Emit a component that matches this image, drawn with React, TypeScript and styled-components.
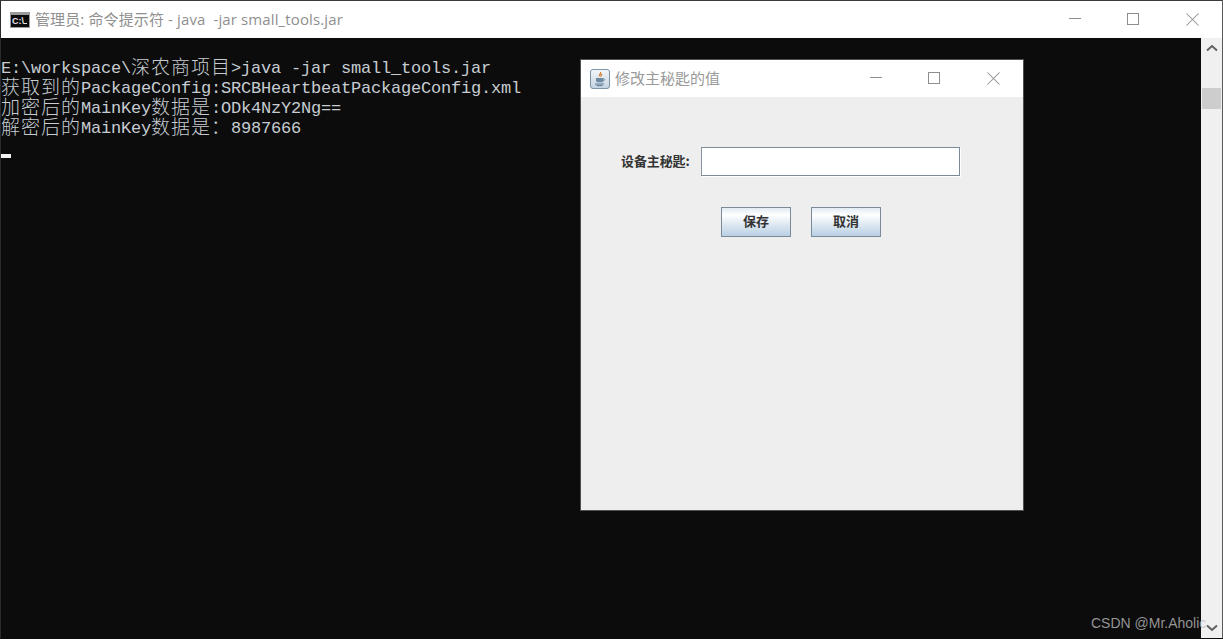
import styled, { createGlobalStyle } from 'styled-components';

const GlobalStyle = createGlobalStyle`
  html, body {
    margin: 0;
    padding: 0;
    background: #0c0c0c;
  }
`;

const CJK = '"Noto Sans CJK SC"';

function CmdIcon() {
  return (
    <svg width="20" height="16" viewBox="0 0 20 16">
      <rect x="0" y="0" width="20" height="16" fill="#9a9a9a" />
      <rect x="1" y="3" width="18" height="12" fill="#0c0c0c" />
      <text x="2" y="12" fontFamily="Liberation Sans, sans-serif" fontWeight="700" fontSize="9" fill="#e8e8e8">
        C:\
      </text>
      <rect x="14" y="11" width="3" height="1" fill="#e8e8e8" />
    </svg>
  );
}

function JavaIcon() {
  return (
    <svg width="20" height="20" viewBox="0 0 20 20">
      <defs>
        <linearGradient id="javaBg" x1="0" y1="0" x2="0" y2="1">
          <stop offset="0" stopColor="#f4f7fa" />
          <stop offset="1" stopColor="#c3d2e0" />
        </linearGradient>
      </defs>
      <rect x="0.5" y="0.5" width="19" height="19" rx="2.5" fill="url(#javaBg)" stroke="#7f93a6" />
      <path d="M10.5 3c1 1.5-1.8 2.5-1 4.2M12 5c-.5 1-1.6 1.4-1.2 2.6" fill="none" stroke="#d9782a" strokeWidth="1.2" />
      <path d="M6 9h7.5v2.5c0 1.2-1 1.8-2 1.8H8c-1 0-2-.6-2-1.8z" fill="#6f8aa3" />
      <path d="M13.5 9.8c1.4-.2 1.6 1.6-.3 2" fill="none" stroke="#6f8aa3" />
      <path d="M5 15h9M6.5 16.6h6" stroke="#5a7894" strokeWidth="1" />
    </svg>
  );
}

export default function App() {
  return (
    <Desktop>
      <GlobalStyle />
      <ConsoleWindow>
        <TitleBar>
          <TitleIcon>
            <CmdIcon />
          </TitleIcon>
          <ConsoleTitle>管理员: 命令提示符 - java&nbsp;&nbsp;-jar small_tools.jar</ConsoleTitle>
          <Controls>
            <MinButton />
            <MaxButton />
            <CloseButton />
          </Controls>
        </TitleBar>
        <ConsoleArea>
          <Terminal>
            <Row />
            <Row>
              E:\workspace\<Han>深农商项目</Han>&gt;java -jar small_tools.jar
            </Row>
            <Row>
              <Han>获取到的</Han>PackageConfig:SRCBHeartbeatPackageConfig.xml
            </Row>
            <Row>
              <Han>加密后的</Han>MainKey<Han>数据是</Han>:ODk4NzY2Ng==
            </Row>
            <Row>
              <Han>解密后的</Han>MainKey<Han>数据是：</Han>8987666
            </Row>
            <Row>
              <Cursor />
            </Row>
          </Terminal>
          <Scrollbar>
            <Arrow viewBox="0 0 12 8">
              <path d="M1 6.5 6 2l5 4.5" />
            </Arrow>
            <Thumb />
            <Spacer />
            <Arrow viewBox="0 0 12 8">
              <path d="M1 1.5 6 6l5-4.5" />
            </Arrow>
          </Scrollbar>
        </ConsoleArea>
      </ConsoleWindow>

      <Dialog>
        <DialogTitleBar>
          <JavaIcon />
          <DialogTitle>修改主秘匙的值</DialogTitle>
          <DialogControls>
            <MinButton />
            <MaxButton />
            <CloseButton />
          </DialogControls>
        </DialogTitleBar>
        <DialogBody>
          <FieldRow>
            <FieldLabel>设备主秘匙:</FieldLabel>
            <FieldInput />
          </FieldRow>
          <ButtonRow>
            <SwingButton>保存</SwingButton>
            <SwingButton>取消</SwingButton>
          </ButtonRow>
        </DialogBody>
      </Dialog>

      <Watermark>CSDN @Mr.Aholic</Watermark>
    </Desktop>
  );
}

const Desktop = styled.div`
  position: relative;
  width: 1223px;
  height: 639px;
  overflow: hidden;
  background: #0c0c0c;
`;

const ConsoleWindow = styled.div`
  display: flex;
  flex-direction: column;
  height: 637px;
  border-top: 1px solid #3a3d36;
  border-left: 1px solid #2c2c2c;
  border-right: 1px solid #5a5a5a;
`;

const TitleBar = styled.div`
  display: flex;
  align-items: center;
  height: 37px;
  flex: none;
  background: #ffffff;
  padding-left: 9px;
`;

const TitleIcon = styled.div`
  display: flex;
  margin-right: 5px;
`;

const ConsoleTitle = styled.div`
  margin-bottom: 1px;
  font: 15px/20px "Open Sans", ${CJK}, sans-serif;
  color: #8f8f8f;
  white-space: nowrap;
  letter-spacing: 0.12px;
`;

const Controls = styled.div`
  display: flex;
  margin-left: auto;
  margin-right: 1px;
`;

const ControlBase = styled.div`
  position: relative;
  width: 59px;
  height: 37px;
`;

const MinButton = styled(ControlBase)`
  &::before {
    content: '';
    position: absolute;
    left: 25px;
    top: 17px;
    width: 12px;
    height: 1px;
    background: #8e8e8e;
  }
`;

const MaxButton = styled(ControlBase)`
  &::before {
    content: '';
    position: absolute;
    left: 24px;
    top: 12px;
    width: 10px;
    height: 10px;
    border: 1px solid #8e8e8e;
  }
`;

const CloseButton = styled(ControlBase)`
  &::before,
  &::after {
    content: '';
    position: absolute;
    left: 22px;
    top: 18px;
    width: 17px;
    height: 1px;
    background: #8e8e8e;
    transform: rotate(45deg);
  }
  &::after {
    transform: rotate(-45deg);
  }
`;

const ConsoleArea = styled.div`
  display: flex;
  flex: 1;
  min-height: 0;
  background: #0c0c0c;
`;

const Terminal = styled.div`
  flex: 1;
  color: #c6ccd2;
  font-family: "Liberation Mono", monospace;
  font-size: 17px;
  letter-spacing: -0.2px;
`;

const Row = styled.div`
  position: relative;
  height: 20px;
  line-height: 16px;
  white-space: pre;
`;

const Han = styled.span`
  font-family: ${CJK}, sans-serif;
  font-size: 19px;
  font-weight: 300;
  line-height: 16px;
  letter-spacing: 1px;
  vertical-align: -1px;
`;

const Cursor = styled.div`
  position: absolute;
  left: 0;
  bottom: 0;
  width: 10px;
  height: 4px;
  background: #f2f2f2;
`;

const Scrollbar = styled.div`
  display: flex;
  flex-direction: column;
  align-items: center;
  width: 21px;
  flex: none;
  background: #f0f0f0;
  padding: 6px 0;
  box-sizing: border-box;
`;

const Arrow = styled.svg`
  width: 12px;
  height: 8px;
  flex: none;

  path {
    fill: none;
    stroke: #606060;
    stroke-width: 2;
  }
`;

const Thumb = styled.div`
  width: 19px;
  height: 21px;
  margin-top: 36px;
  background: #cdcdcd;
`;

const Spacer = styled.div`
  flex: 1;
`;

const Dialog = styled.div`
  position: absolute;
  left: 581px;
  top: 60px;
  width: 442px;
  height: 450px;
  display: flex;
  flex-direction: column;
  background: #eeeeee;
  box-shadow: 0 0 0 1px rgba(110, 110, 110, 0.7);
`;

const DialogTitleBar = styled.div`
  display: flex;
  align-items: center;
  flex: none;
  height: 37px;
  padding-left: 9px;
  background: #ffffff;
`;

const DialogTitle = styled.div`
  margin: 0 0 2px 5px;
  font: 15px/20px ${CJK}, sans-serif;
  color: #9a9a9a;
`;

const DialogControls = styled.div`
  display: flex;
  margin-left: auto;
  margin-right: 1px;
`;

const DialogBody = styled.div`
  flex: 1;
  padding-top: 50px;
`;

const FieldRow = styled.div`
  display: flex;
  align-items: center;
  padding-left: 40px;
`;

const FieldLabel = styled.div`
  width: 80px;
  margin-bottom: 2px;
  font: 700 13px/16px ${CJK}, sans-serif;
  letter-spacing: -0.1px;
  color: #333333;
`;

const FieldInput = styled.div`
  box-sizing: border-box;
  width: 259px;
  height: 29px;
  background: #ffffff;
  border: 1px solid #7a8a99;
  border-left-color: #8896a3;
  box-shadow: 1px 1px 0 #ffffff;
`;

const ButtonRow = styled.div`
  display: flex;
  gap: 20px;
  padding: 31px 0 0 140px;
`;

const SwingButton = styled.div`
  box-sizing: border-box;
  display: flex;
  align-items: center;
  justify-content: center;
  width: 70px;
  height: 30px;
  padding-bottom: 2px;
  border: 1px solid #7a8a99;
  background: linear-gradient(180deg, #e2ebf3 0%, #ffffff 25%, #dde8f2 60%, #b9cfe3 100%);
  font: 700 13px/16px ${CJK}, sans-serif;
  color: #333333;
`;

const Watermark = styled.div`
  position: absolute;
  left: 1091px;
  top: 615px;
  font: 14px/17px "Liberation Sans", sans-serif;
  color: rgba(190, 190, 190, 0.78);
  white-space: nowrap;
`;
